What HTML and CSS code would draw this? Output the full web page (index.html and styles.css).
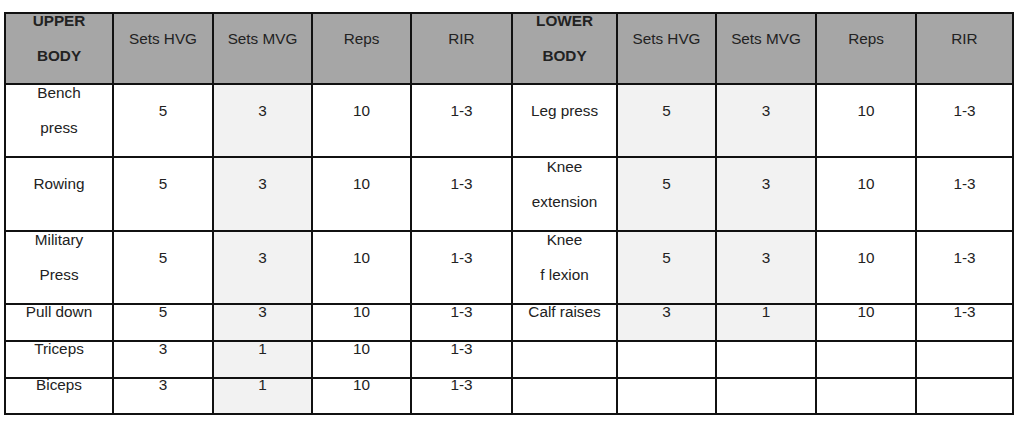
FILE: index.html
```html
<!DOCTYPE html>
<html lang="en">
<head>
<meta charset="utf-8">
<title>Training volume</title>
<link rel="stylesheet" href="styles.css">
</head>
<body>
<table class="plan">
  <colgroup>
    <col class="c1"><col class="c2"><col class="c3"><col class="c4"><col class="c5">
    <col class="c6"><col class="c7"><col class="c8"><col class="c9"><col class="c10">
  </colgroup>
  <thead>
    <tr class="r-head">
      <th class="bold"><div class="t">UPPER<br>BODY</div></th>
      <th><div class="t">Sets HVG</div></th>
      <th><div class="t">Sets MVG</div></th>
      <th><div class="t">Reps</div></th>
      <th><div class="t">RIR</div></th>
      <th class="bold"><div class="t">LOWER<br>BODY</div></th>
      <th><div class="t">Sets HVG</div></th>
      <th><div class="t">Sets MVG</div></th>
      <th><div class="t">Reps</div></th>
      <th><div class="t">RIR</div></th>
    </tr>
  </thead>
  <tbody>
    <tr class="r-tall">
      <td><div class="t">Bench<br>press</div></td>
      <td><div class="t">5</div></td>
      <td class="shade"><div class="t">3</div></td>
      <td><div class="t">10</div></td>
      <td><div class="t">1-3</div></td>
      <td><div class="t">Leg press</div></td>
      <td class="shade"><div class="t">5</div></td>
      <td class="shade"><div class="t">3</div></td>
      <td><div class="t">10</div></td>
      <td><div class="t">1-3</div></td>
    </tr>
    <tr class="r-tall2">
      <td><div class="t">Rowing</div></td>
      <td><div class="t">5</div></td>
      <td class="shade"><div class="t">3</div></td>
      <td><div class="t">10</div></td>
      <td><div class="t">1-3</div></td>
      <td><div class="t">Knee<br>extension</div></td>
      <td class="shade"><div class="t">5</div></td>
      <td class="shade"><div class="t">3</div></td>
      <td><div class="t">10</div></td>
      <td><div class="t">1-3</div></td>
    </tr>
    <tr class="r-tall">
      <td><div class="t">Military<br>Press</div></td>
      <td><div class="t">5</div></td>
      <td class="shade"><div class="t">3</div></td>
      <td><div class="t">10</div></td>
      <td><div class="t">1-3</div></td>
      <td><div class="t">Knee<br>f lexion</div></td>
      <td class="shade"><div class="t">5</div></td>
      <td class="shade"><div class="t">3</div></td>
      <td><div class="t">10</div></td>
      <td><div class="t">1-3</div></td>
    </tr>
    <tr class="r-short">
      <td><div class="t">Pull down</div></td>
      <td><div class="t">5</div></td>
      <td class="shade"><div class="t">3</div></td>
      <td><div class="t">10</div></td>
      <td><div class="t">1-3</div></td>
      <td><div class="t">Calf raises</div></td>
      <td class="shade"><div class="t">3</div></td>
      <td class="shade"><div class="t">1</div></td>
      <td><div class="t">10</div></td>
      <td><div class="t">1-3</div></td>
    </tr>
    <tr class="r-short">
      <td><div class="t">Triceps</div></td>
      <td><div class="t">3</div></td>
      <td class="shade"><div class="t">1</div></td>
      <td><div class="t">10</div></td>
      <td><div class="t">1-3</div></td>
      <td></td><td></td><td></td><td></td><td></td>
    </tr>
    <tr class="r-last">
      <td><div class="t">Biceps</div></td>
      <td><div class="t">3</div></td>
      <td class="shade"><div class="t">1</div></td>
      <td><div class="t">10</div></td>
      <td><div class="t">1-3</div></td>
      <td></td><td></td><td></td><td></td><td></td>
    </tr>
  </tbody>
</table>
</body>
</html>
```

FILE: styles.css
```css
html, body {
  margin: 0;
  padding: 0;
  background: #ffffff;
}

body {
  padding: 12px 0 0 4px;
  font-family: "Liberation Sans", Arial, sans-serif;
  font-size: 15.3px;
  color: #222222;
}

.plan {
  border-collapse: collapse;
  table-layout: fixed;
  width: 1010px;
}

.plan th,
.plan td {
  border: 2px solid #111111;
  padding: 0 2px;
  text-align: center;
  vertical-align: middle;
  overflow: visible;
  white-space: nowrap;
}

.plan th {
  background: #a6a6a6;
  font-weight: normal;
}

.plan th.bold {
  font-weight: bold;
}

.plan td.shade {
  background: #f2f2f2;
}

.t {
  line-height: 35px;
  margin-top: -21px;
}

.r-short .t,
.r-last .t {
  margin-top: -23px;
}

.c1 { width: 108px; }
.c2 { width: 100px; }
.c3 { width: 99px; }
.c4 { width: 99px; }
.c5 { width: 101px; }
.c6 { width: 105px; }
.c7 { width: 99px; }
.c8 { width: 100px; }
.c9 { width: 100px; }
.c10 { width: 97px; }

.r-head { height: 71px; }
.r-tall { height: 73px; }
.r-tall2 { height: 74px; }
.r-short { height: 37px; }
.r-last { height: 36px; }
```
